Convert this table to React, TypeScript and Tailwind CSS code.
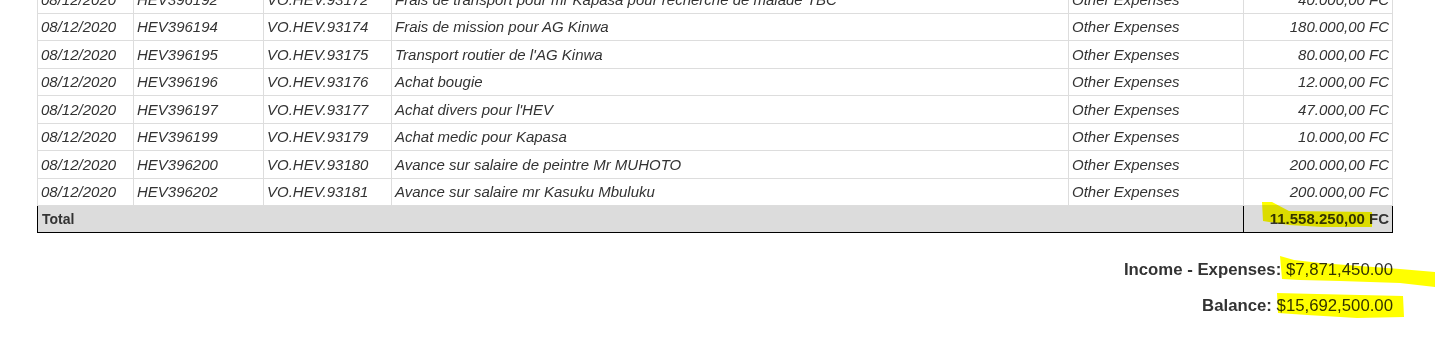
import React from 'react';

type Row = {
  date: string;
  ref: string;
  voucher: string;
  label: string;
  category: string;
  amount: string;
};

const rows: Row[] = [
  { date: '08/12/2020', ref: 'HEV396192', voucher: 'VO.HEV.93172', label: 'Frais de transport pour mr Kapasa pour recherche de malade TBC', category: 'Other Expenses', amount: '40.000,00 FC' },
  { date: '08/12/2020', ref: 'HEV396194', voucher: 'VO.HEV.93174', label: 'Frais de mission pour AG Kinwa', category: 'Other Expenses', amount: '180.000,00 FC' },
  { date: '08/12/2020', ref: 'HEV396195', voucher: 'VO.HEV.93175', label: "Transport routier de l'AG Kinwa", category: 'Other Expenses', amount: '80.000,00 FC' },
  { date: '08/12/2020', ref: 'HEV396196', voucher: 'VO.HEV.93176', label: 'Achat bougie', category: 'Other Expenses', amount: '12.000,00 FC' },
  { date: '08/12/2020', ref: 'HEV396197', voucher: 'VO.HEV.93177', label: "Achat divers pour l'HEV", category: 'Other Expenses', amount: '47.000,00 FC' },
  { date: '08/12/2020', ref: 'HEV396199', voucher: 'VO.HEV.93179', label: 'Achat medic pour Kapasa', category: 'Other Expenses', amount: '10.000,00 FC' },
  { date: '08/12/2020', ref: 'HEV396200', voucher: 'VO.HEV.93180', label: 'Avance sur salaire de peintre Mr MUHOTO', category: 'Other Expenses', amount: '200.000,00 FC' },
  { date: '08/12/2020', ref: 'HEV396202', voucher: 'VO.HEV.93181', label: 'Avance sur salaire mr Kasuku Mbuluku', category: 'Other Expenses', amount: '200.000,00 FC' },
];

const cols = 'grid grid-cols-[97px_130px_128px_677px_175px_149px] w-fit';
const cell = 'h-[27.5px] flex items-center border-r border-b border-[#dddddd] px-[3px] whitespace-nowrap overflow-hidden';

// marker stroke drawn over the text, like a highlighter pen
function Marker({ className, w, h, points }: { className: string; w: number; h: number; points: string }) {
  return (
    <svg
      className={`absolute pointer-events-none mix-blend-multiply ${className}`}
      width={w}
      height={h}
      viewBox={`0 0 ${w} ${h}`}
    >
      <polygon points={points} fill="#ffff00" />
    </svg>
  );
}

export default function App() {
  return (
    <div className="w-[1435px] h-[352px] overflow-hidden bg-white text-[#333333] font-['Liberation_Sans',Arial,sans-serif]">
      <div className="-mt-[14px] pl-[37px]">
        {/* Expense rows */}
        <div className="text-[15px] italic leading-[17px]">
          {rows.map((r) => (
            <div key={r.ref} className={cols}>
              <div className={`${cell} border-l`}>{r.date}</div>
              <div className={cell}>{r.ref}</div>
              <div className={cell}>{r.voucher}</div>
              <div className={cell}>{r.label}</div>
              <div className={cell}>{r.category}</div>
              <div className={`${cell} justify-end`}>{r.amount}</div>
            </div>
          ))}
        </div>

        {/* Total */}
        <div className={`${cols} font-bold leading-[16px]`}>
          <div className="col-span-5 h-[27px] flex items-center bg-[#dcdcdc] border-l border-r border-b border-black px-[4px] text-[14px]">
            Total
          </div>
          <div className="h-[27px] flex items-center justify-end bg-[#dcdcdc] border-r border-b border-black px-[3px] text-[15px]">
            <span className="relative">
              11.558.250,00 FC
              <Marker
                className="-left-[8px] -top-[10px]"
                w={112}
                h={28}
                points="0,1 10,1 27,10 110,11 110,26 60,26 27,24 1,20"
              />
            </span>
          </div>
        </div>
      </div>

      {/* Summary */}
      <div className="mt-[27px] pr-[42px] flex flex-col items-end gap-[17px] text-[16.75px] leading-[19px]">
        <p>
          <span className="font-bold">Income - Expenses: </span>
          <span className="relative">
            $7,871,450.00
            <Marker
              className="-left-[6px] -top-[4px]"
              w={156}
              h={32}
              points="0,0 14,4 40,7 120,13 155,16 155,31 120,27 60,25 20,24 2,23"
            />
          </span>
        </p>
        <p>
          <span className="font-bold">Balance: </span>
          <span className="relative">
            $15,692,500.00
            <Marker
              className="left-[0px] -top-[3px]"
              w={128}
              h={26}
              points="0,0 40,1 126,3 127,24 80,25 30,22 1,20"
            />
          </span>
        </p>
      </div>
    </div>
  );
}
